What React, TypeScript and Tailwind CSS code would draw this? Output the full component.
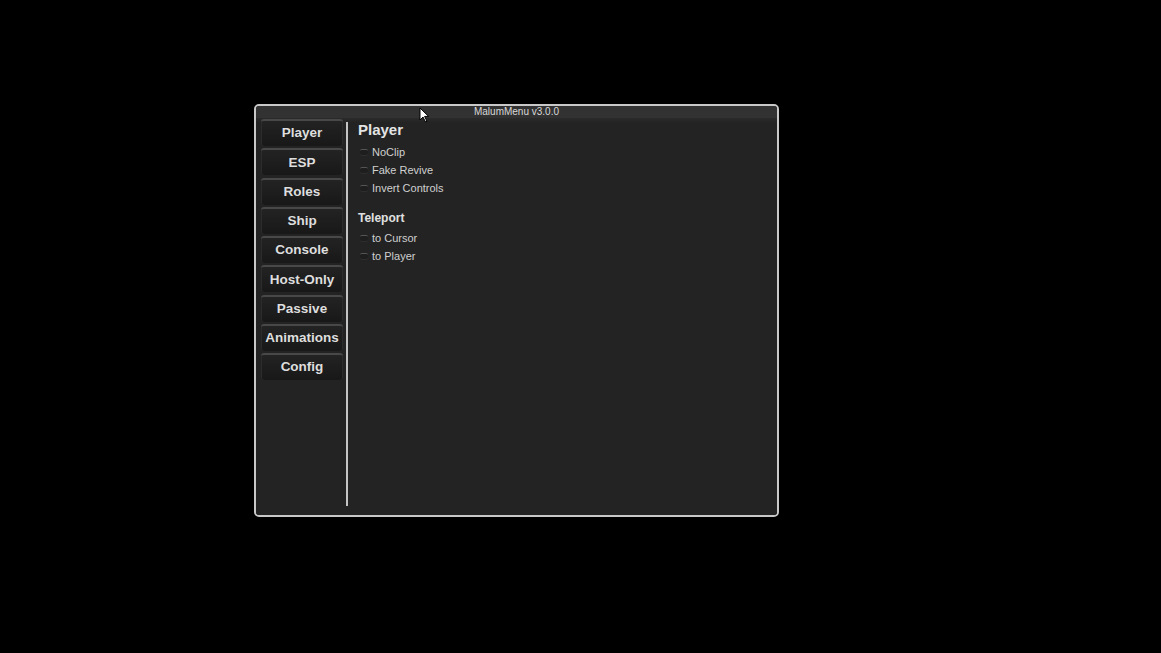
const tabs = ['Player', 'ESP', 'Roles', 'Ship', 'Console', 'Host-Only', 'Passive', 'Animations', 'Config']

function Toggle({ label }: { label: string }) {
  return (
    <div className="flex h-[18px] items-center gap-[4px]">
      <span className="ml-[2px] h-[6px] w-[8px] rounded-[2px] border-t border-[#555] bg-[#1e1e1e] shadow-[0_1px_0_#2e2e2e]" />
      <span className="text-[11px] text-[#d0d0d0]">{label}</span>
    </div>
  )
}

function Cursor() {
  return (
    <svg className="absolute left-[419px] top-[107px]" width="11" height="16" viewBox="0 0 11 16">
      <path d="M1 1 L1 13 L4 10 L6.5 15 L8 14.3 L5.6 9.4 L9.6 9.4 Z" fill="#fff" stroke="#000" strokeWidth="1" />
    </svg>
  )
}

export default function App() {
  return (
    <div className="relative h-[653px] w-[1161px] bg-black pl-[254px] pt-[104px] font-['Liberation_Sans',Arial,sans-serif]">
      <div className="flex h-[413px] w-[525px] flex-col overflow-hidden rounded-[5px] border-2 border-[#c8c8c8] bg-[#232323]">
        <div className="relative flex h-[12px] shrink-0 items-center justify-center bg-[#323232]">
          <span className="text-[10px] leading-none text-[#d8d8d8]">MalumMenu v3.0.0</span>
        </div>
        <div className="flex flex-1 bg-gradient-to-b from-[#2a2a2a] via-[#232323] via-[5px] to-[#232323] pl-[5px] pb-[9px]">
          <div className="flex w-[82px] flex-col gap-[2.25px] pt-[1px]">
            {tabs.map((t) => (
              <div
                key={t}
                className="flex h-[27px] items-center justify-center rounded-[3px] border-t-2 border-[#484848] bg-gradient-to-b from-[#232323] to-[#181818] shadow-[inset_1px_0_0_#2c2c2c,inset_-1px_0_0_#2c2c2c]"
              >
                <span className="text-[13.5px] font-bold text-[#dedede]">{t}</span>
              </div>
            ))}
          </div>
          <div className="ml-[3px] mt-[4px] w-[2px] bg-[#c4c4c4]" />
          <div className="flex flex-col pl-[10px] pt-[3px]">
            <div className="text-[15px] font-bold leading-[18px] text-[#e4e4e4]">Player</div>
            <div className="mt-[4px] flex flex-col">
              <Toggle label="NoClip" />
              <Toggle label="Fake Revive" />
              <Toggle label="Invert Controls" />
            </div>
            <div className="mt-[13px] text-[12px] font-bold leading-[16px] text-[#e0e0e0]">Teleport</div>
            <div className="mt-[3px] flex flex-col">
              <Toggle label="to Cursor" />
              <Toggle label="to Player" />
            </div>
          </div>
        </div>
      </div>
      <Cursor />
    </div>
  )
}
